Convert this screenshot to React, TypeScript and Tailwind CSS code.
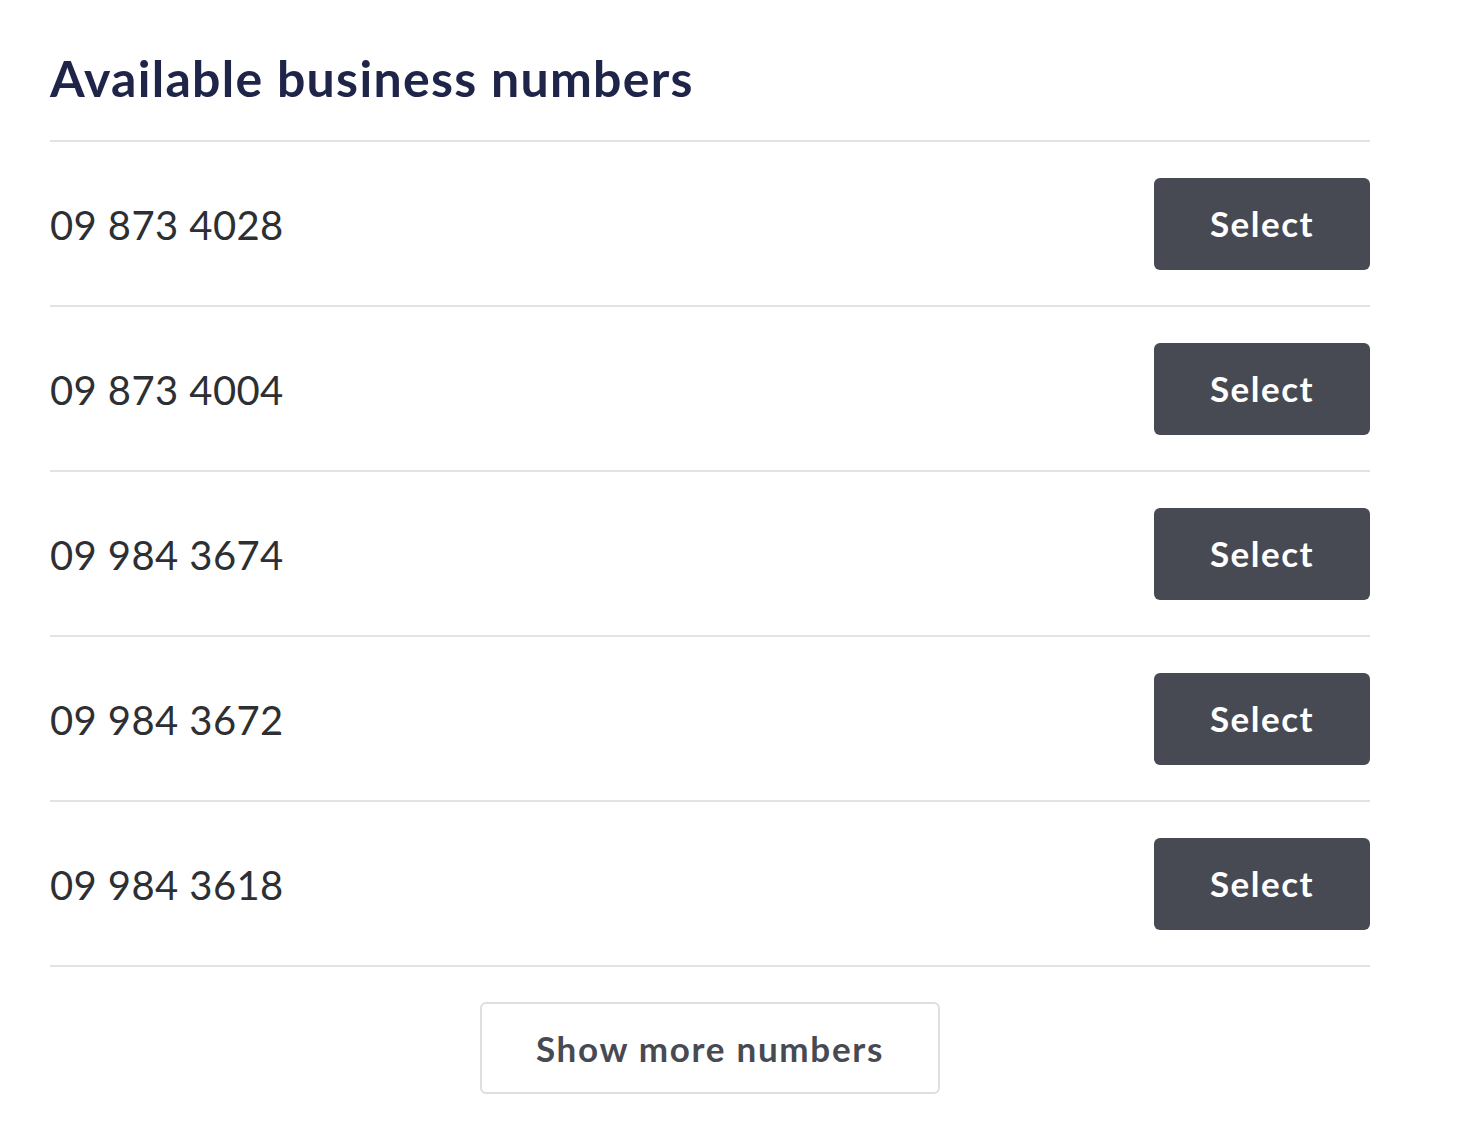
import React from "react";

const numbers = ["09 873 4028", "09 873 4004", "09 984 3674", "09 984 3672", "09 984 3618"];

const App = () => {
  return (
    <div className="min-h-screen bg-white" style={{ fontFamily: "Lato, 'Open Sans', sans-serif" }}>
      <div className="w-[1320px] ml-[50px] pt-[46px]">
        <h1 className="text-[50px] leading-[64px] font-bold tracking-[1.3px] text-[#1f2449] pb-[30px] border-b-2 border-[#e3e3e3]">
          Available business numbers
        </h1>

        {numbers.map((num, index) => (
          <div
            key={index}
            className="h-[165px] flex items-center justify-between border-b-2 border-[#e3e3e3]"
          >
            <span className="text-[40px] tracking-[0.4px] text-[#2d2f33] pt-[2px]">{num}</span>
            <button className="w-[216px] h-[92px] rounded-[6px] bg-[#484a53] text-white text-[35px] font-bold tracking-[1.5px]">
              Select
            </button>
          </div>
        ))}

        <div className="flex justify-center pt-[35px]">
          <button className="w-[460px] h-[92px] rounded-[6px] border-2 border-[#dedede] bg-white text-[#484a53] text-[35px] font-bold tracking-[1.7px]">
            Show more numbers
          </button>
        </div>
      </div>
    </div>
  );
};

export default App;
